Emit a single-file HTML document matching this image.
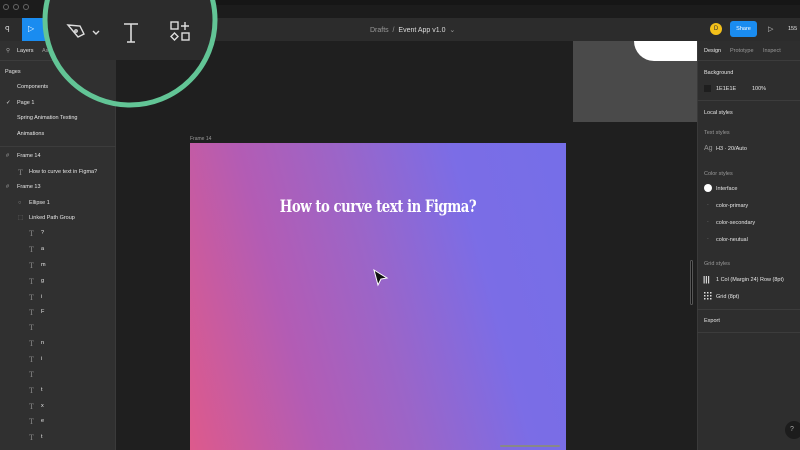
<!DOCTYPE html>
<html><head><meta charset="utf-8"><style>
*{margin:0;padding:0;box-sizing:border-box}
body{width:800px;height:450px;overflow:hidden;background:#1f1f1f;font-family:"Liberation Sans",sans-serif;position:relative;color:#ddd}
.a{position:absolute}
.t{position:absolute;font-size:5.5px;color:#e6e6e6;white-space:nowrap}
.g{color:#999}
.ic{position:absolute;font-family:"Liberation Serif",serif;font-size:8px;color:#888}
</style></head><body>
<div class="a" style="left:0;top:0;width:800px;height:18px;background:#1c1c1c"></div>
<div class="a" style="left:140px;top:0;width:660px;height:5px;background:#161616"></div>
<div class="a" style="left:3px;top:4px;width:6px;height:6px;border-radius:50%;border:1px solid #666"></div>
<div class="a" style="left:13px;top:4px;width:6px;height:6px;border-radius:50%;border:1px solid #666"></div>
<div class="a" style="left:23px;top:4px;width:6px;height:6px;border-radius:50%;border:1px solid #666"></div>
<div class="a" style="left:0;top:18px;width:800px;height:23px;background:#2c2c2c"></div>
<div class="a" style="left:22px;top:18px;width:24px;height:23px;background:#1a8cf0"></div>
<div class="t" style="left:5px;top:25px;font-size:8px;color:#ccc">ꟼ</div>
<div class="t" style="left:28px;top:24px;font-size:8px;color:#fff">▷</div>
<div class="t g" style="left:370px;top:26px;font-size:7px">Drafts &nbsp;/&nbsp; <span style="color:#ddd">Event App v1.0</span> &nbsp;⌄</div>
<div class="a" style="left:710px;top:23px;width:12px;height:12px;border-radius:50%;background:#f3c01a;font-size:6px;color:#333;text-align:center;line-height:12px">D</div>
<div class="a" style="left:730px;top:21px;width:27px;height:16px;border-radius:3px;background:#1a8cf0;font-size:5.5px;color:#fff;text-align:center;line-height:16px">Share</div>
<div class="t" style="left:768px;top:25px;font-size:7px;color:#ccc">▷</div>
<div class="t" style="left:788px;top:26px;font-size:5.5px">155</div>
<!-- left panel -->
<div class="a" style="left:0;top:41px;width:116px;height:409px;background:#303030;border-right:1px solid #3a3a3a"></div>
<div class="a" style="left:0;top:60px;width:116px;height:1px;background:#3c3c3c"></div>
<div class="a" style="left:0;top:146px;width:116px;height:1px;background:#3c3c3c"></div>
<div class="t" style="left:6px;top:48px;color:#aaa">⚲</div>
<div class="t" style="left:17px;top:48px">Layers</div><div class="t g" style="left:42px;top:48px">Ass</div>
<div class="t" style="left:5px;top:69px">Pages</div>
<div class="t" style="left:17px;top:84px">Components</div>
<div class="t" style="left:6px;top:100px">✓</div><div class="t" style="left:17px;top:100px">Page 1</div>
<div class="t" style="left:17px;top:115px">Spring Animation Testing</div>
<div class="t" style="left:17px;top:131px">Animations</div>
<div class="t g" style="left:6px;top:153px">#</div><div class="t" style="left:17px;top:153px">Frame 14</div>
<div class="ic" style="left:18px;top:168px">T</div><div class="t" style="left:29px;top:169px">How to curve text in Figma?</div>
<div class="t g" style="left:6px;top:184px">#</div><div class="t" style="left:17px;top:184px">Frame 13</div>
<div class="t g" style="left:18px;top:200px">○</div><div class="t" style="left:29px;top:200px">Ellipse 1</div>
<div class="t g" style="left:18px;top:215px">⬚</div><div class="t" style="left:29px;top:215px">Linked Path Group</div>
<div class="ic" style="left:29px;top:229px">T</div><div class="t" style="left:41px;top:230px">?</div>
<div class="ic" style="left:29px;top:245px">T</div><div class="t" style="left:41px;top:246px">a</div>
<div class="ic" style="left:29px;top:261px">T</div><div class="t" style="left:41px;top:262px">m</div>
<div class="ic" style="left:29px;top:277px">T</div><div class="t" style="left:41px;top:278px">g</div>
<div class="ic" style="left:29px;top:293px">T</div><div class="t" style="left:41px;top:294px">i</div>
<div class="ic" style="left:29px;top:308px">T</div><div class="t" style="left:41px;top:309px">F</div>
<div class="ic" style="left:29px;top:323px">T</div>
<div class="ic" style="left:29px;top:339px">T</div><div class="t" style="left:41px;top:340px">n</div>
<div class="ic" style="left:29px;top:355px">T</div><div class="t" style="left:41px;top:356px">i</div>
<div class="ic" style="left:29px;top:370px">T</div>
<div class="ic" style="left:29px;top:386px">T</div><div class="t" style="left:41px;top:387px">t</div>
<div class="ic" style="left:29px;top:402px">T</div><div class="t" style="left:41px;top:403px">x</div>
<div class="ic" style="left:29px;top:417px">T</div><div class="t" style="left:41px;top:418px">e</div>
<div class="ic" style="left:29px;top:433px">T</div><div class="t" style="left:41px;top:434px">t</div>
<!-- canvas -->
<div class="a" style="left:573px;top:41px;width:124px;height:81px;background:#4a4a4a"></div>
<div class="a" style="left:634px;top:41px;width:63px;height:20px;background:#fff;border-bottom-left-radius:20px"></div>
<div class="t g" style="left:190px;top:136px;font-size:5px">Frame 14</div>
<div class="a" style="left:190px;top:143px;width:376px;height:307px;background:linear-gradient(75deg,#dd5a8c 0%,#b35cb4 28%,#9b65c8 50%,#7b6de6 75%,#756ee8 100%)"></div>
<div class="a" style="left:190px;top:197px;width:376px;text-align:center;font-family:'DejaVu Serif','Liberation Serif',serif;font-weight:bold;font-size:17px;color:#fff;letter-spacing:-0.6px;transform:scaleX(0.78);transform-origin:center">How to curve text in Figma?</div>
<svg class="a" style="left:372px;top:268px" width="18" height="20" viewBox="0 0 18 20"><path d="M2 2 L15 10 L9 11 L6 17 Z" fill="#111" stroke="#fff" stroke-width="1"/></svg>
<div class="a" style="left:500px;top:445px;width:60px;height:2px;background:#888;border-radius:1px"></div>
<div class="a" style="left:690px;top:260px;width:3px;height:45px;background:#111;border:1px solid #555;border-radius:2px"></div>
<!-- right panel -->
<div class="a" style="left:697px;top:41px;width:103px;height:409px;background:#2e2e2e;border-left:1px solid #3a3a3a"></div>
<div class="a" style="left:697px;top:60px;width:103px;height:1px;background:#3c3c3c"></div>
<div class="a" style="left:697px;top:100px;width:103px;height:1px;background:#3c3c3c"></div>
<div class="a" style="left:697px;top:309px;width:103px;height:1px;background:#3c3c3c"></div>
<div class="a" style="left:697px;top:332px;width:103px;height:1px;background:#3c3c3c"></div>
<div class="t" style="left:704px;top:48px">Design</div><div class="t g" style="left:730px;top:48px">Prototype</div><div class="t g" style="left:763px;top:48px">Inspect</div>
<div class="t" style="left:704px;top:70px">Background</div>
<div class="a" style="left:704px;top:85px;width:7px;height:7px;background:#1e1e1e"></div>
<div class="t" style="left:716px;top:86px">1E1E1E</div><div class="t" style="left:752px;top:86px">100%</div>
<div class="t" style="left:704px;top:110px">Local styles</div>
<div class="t g" style="left:704px;top:130px">Text styles</div>
<div class="t g" style="left:704px;top:145px;font-size:7px">Ag</div><div class="t" style="left:716px;top:146px">H3 · 20/Auto</div>
<div class="t g" style="left:704px;top:171px">Color styles</div>
<div class="a" style="left:704px;top:184px;width:8px;height:8px;border-radius:50%;background:#fff"></div>
<div class="t" style="left:716px;top:186px">Interface</div>
<div class="t g" style="left:707px;top:202px">·</div><div class="t" style="left:716px;top:203px">color-primary</div>
<div class="t g" style="left:707px;top:219px">·</div><div class="t" style="left:716px;top:220px">color-secondary</div>
<div class="t g" style="left:707px;top:236px">·</div><div class="t" style="left:716px;top:237px">color-neutual</div>
<div class="t g" style="left:704px;top:261px">Grid styles</div>
<div class="t" style="left:703px;top:275px;font-size:8px;font-weight:bold">|||</div><div class="t" style="left:716px;top:277px">1 Col (Margin 24) Row (8pt)</div>
<svg class="a" style="left:704px;top:292px" width="8" height="8"><g fill="#ddd"><rect x="0" y="0" width="1.5" height="1.5"/><rect x="3" y="0" width="1.5" height="1.5"/><rect x="6" y="0" width="1.5" height="1.5"/><rect x="0" y="3" width="1.5" height="1.5"/><rect x="3" y="3" width="1.5" height="1.5"/><rect x="6" y="3" width="1.5" height="1.5"/><rect x="0" y="6" width="1.5" height="1.5"/><rect x="3" y="6" width="1.5" height="1.5"/><rect x="6" y="6" width="1.5" height="1.5"/></g></svg>
<div class="t" style="left:716px;top:294px">Grid (8pt)</div>
<div class="t" style="left:704px;top:318px">Export</div>
<div class="a" style="left:785px;top:421px;width:18px;height:18px;border-radius:50%;background:#1c1c1c;font-size:7px;color:#aaa;line-height:18px;padding-left:5px">?</div>
<!-- zoom circle -->
<svg class="a" style="left:0;top:0" width="240" height="120" viewBox="0 0 240 120">
<defs><clipPath id="c"><circle cx="130" cy="20" r="84"/></clipPath></defs>
<g clip-path="url(#c)"><rect x="0" y="0" width="240" height="60" fill="#2c2c2c"/><rect x="0" y="60" width="240" height="60" fill="#1f1f1f"/><rect x="0" y="60" width="116" height="60" fill="#303030"/>
<g fill="none" stroke="#ddd" stroke-width="1.4">
<path d="M68 25 L78 37 L84 34 L80 26 Z"/><circle cx="76" cy="31" r="1.2"/><path d="M93 31 l3 3 l3 -3"/>
<path d="M124 24 H138 M131 24 V42 M127 42 H135" stroke-width="1.6"/>
<rect x="171" y="22" width="7" height="7"/><path d="M185 22 V30 M181 26 H189"/><path d="M174.5 33 l3.5 3.5 l-3.5 3.5 l-3.5 -3.5 Z"/><rect x="182" y="33" width="7" height="7"/>
</g></g>
<circle cx="130" cy="20" r="85" fill="none" stroke="#62c596" stroke-width="5"/>
</svg>
</body></html>
